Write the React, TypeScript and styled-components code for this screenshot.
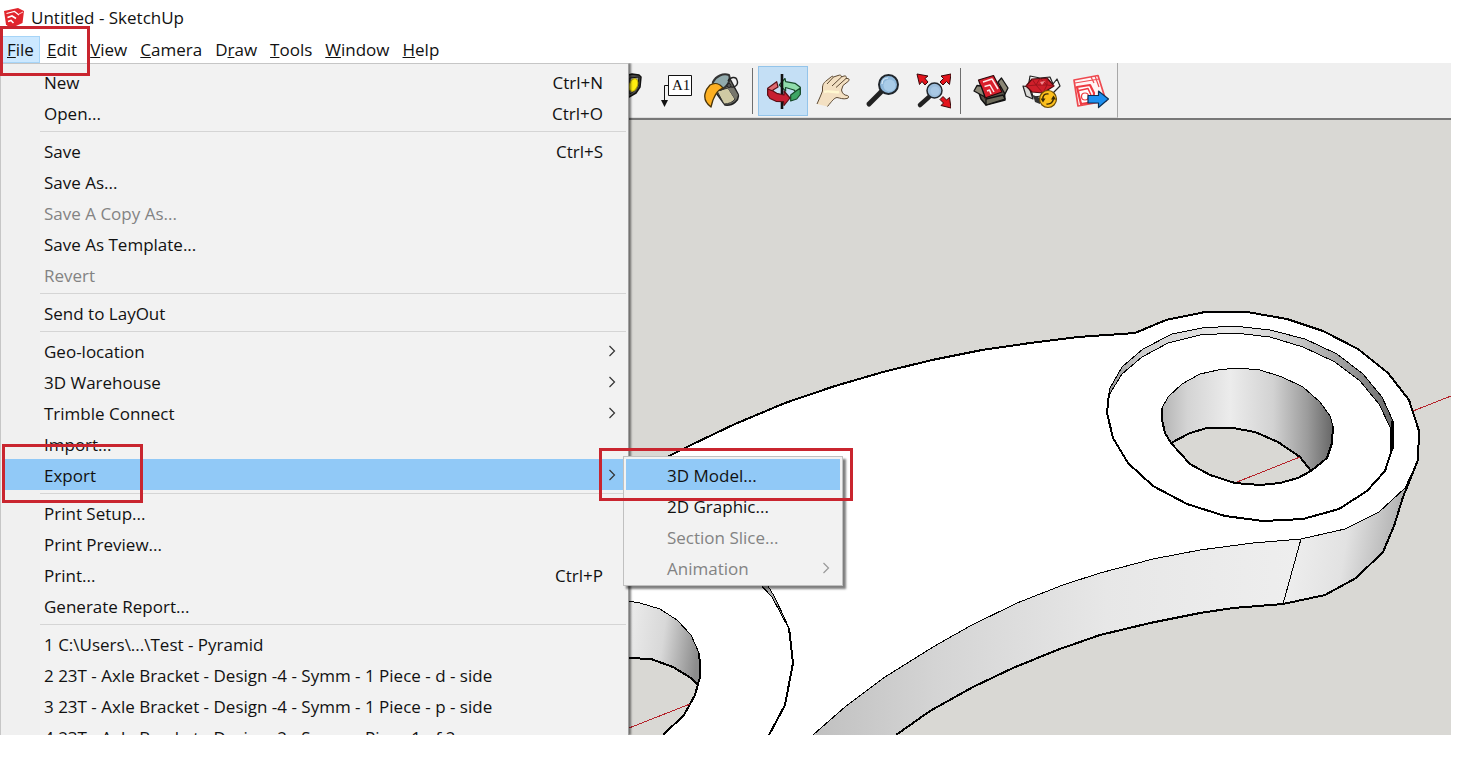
import React from 'react';
import styled, { createGlobalStyle, css } from 'styled-components';

const GlobalStyle = createGlobalStyle`
  * { box-sizing: border-box; }
  html, body { margin: 0; padding: 0; background: #fff; }
  body, button {
    font-family: 'Open Sans', 'Noto Sans', sans-serif;
    font-size: 17px;
    font-weight: 400;
    line-height: 24px;
    color: #111;
  }
  button { border: 0; background: none; padding: 0; margin: 0; text-align: left; }
  ul { list-style: none; margin: 0; padding: 0; }
`;

const Window = styled.div`
  position: relative;
  height: 100vh;
  padding: 0 11px 24px 0;
  display: flex;
  flex-direction: column;
  overflow: hidden;
`;

const TitleBar = styled.header`
  display: flex;
  align-items: center;
  gap: 7px;
  height: 36px;
  padding-left: 4px;
  flex: none;
`;

const Title = styled.h1`
  margin: 0;
  font-size: 17px;
  font-weight: 400;
`;

const MenuBar = styled.nav`
  display: flex;
  height: 27px;
  flex: none;
`;

const MenuBarButton = styled.button<{ $open?: boolean }>`
  height: 27px;
  padding: 0 6px 0 7px;
  ${(p) =>
    p.$open &&
    css`
      background: #cce8ff;
      box-shadow: inset 0 0 0 1px #a6d4f7;
    `}
`;

const Body = styled.div`
  display: flex;
  flex: 1;
  min-height: 0;
`;

const FileMenu = styled.ul`
  position: relative;
  z-index: 2;
  flex: none;
  width: 629px;
  padding: 2px;
  background: linear-gradient(to right, #f0f0f0 39px, #f2f2f2 39px);
  border: 1px solid #c6c6c6;
  border-right-color: #a0a0a0;
  border-bottom: 0;
  box-shadow: 2px 0 2px rgba(0, 0, 0, 0.5);
  clip-path: inset(0 -6px 0 0);
`;

const MenuRow = styled.li`
  position: relative;
`;

const MenuButton = styled.button<{ $active?: boolean }>`
  display: flex;
  align-items: center;
  justify-content: space-between;
  width: 100%;
  height: 31px;
  padding: 2px 23px 0 41px;
  background: ${(p) => (p.$active ? '#91c9f7' : 'transparent')};
  &:disabled { color: #838383; }
`;

const Chevron = styled.svg`
  width: 8px;
  height: 12px;
  margin: 0 -13px 2px 0;
  fill: none;
  stroke: #333;
  button:disabled & { stroke: #999; }
`;

const Divider = styled.li`
  height: 7px;
  margin-left: 37px;
  padding-top: 3px;
  &::before {
    content: '';
    display: block;
    height: 1px;
    background: #d5d5d5;
  }
`;

const SubMenu = styled.ul`
  position: absolute;
  z-index: 3;
  width: 220px;
  padding: 2px;
  background: #f2f2f2;
  border: 1px solid #c0c0c0;
  box-shadow: 3px 3px 2px rgba(0, 0, 0, 0.5);
`;

const ExportSubMenu = styled(SubMenu)`
  left: 623px;
  top: 456px;
`;

const Main = styled.main`
  display: flex;
  flex-direction: column;
  flex: 1;
  min-width: 0;
`;

const ToolbarArea = styled.div`
  flex: none;
  display: flex;
  height: 57px;
  background: #efefef;
  border-bottom: 2px solid #777;
`;

const Toolbar = styled.div`
  display: flex;
  padding: 3px 1px 0 0;
  background: #f1f1f1;
  border-right: 1px solid #a8a8a8;
  border-bottom: 1px solid #dcdcdc;
`;

const ToolButton = styled.button<{ $active?: boolean; $cut?: boolean }>`
  display: flex;
  align-items: center;
  justify-content: ${(p) => (p.$cut ? 'flex-end' : 'center')};
  width: ${(p) => (p.$cut ? 18 : 50)}px;
  height: 50px;
  overflow: hidden;
  ${(p) =>
    p.$active &&
    css`
      background: #c4dff5;
      box-shadow: inset 0 0 0 1px #93c4ea;
    `}
`;

const ToolSeparator = styled.span<{ $tight?: boolean }>`
  width: 1px;
  height: 46px;
  margin: ${(p) => (p.$tight ? '2px 5px 0 2px' : '2px 5px 0')};
  background: #6e6e6e;
`;

const Icon = styled.svg`
  width: 36px;
  height: 36px;
  flex: none;
  stroke-linejoin: round;
`;

const LogoIcon = styled.svg`
  width: 20px;
  height: 21px;
  flex: none;
`;

const Viewport = styled.svg`
  display: block;
  flex: 1;
  min-height: 0;
  width: 100%;
  background: #d9d8d4;
`;

const Highlight = styled.div<{ $x: number; $y: number; $w: number; $h: number }>`
  position: absolute;
  z-index: 4;
  left: ${(p) => p.$x}px;
  top: ${(p) => p.$y}px;
  width: ${(p) => p.$w}px;
  height: ${(p) => p.$h}px;
  border: 3px solid #c9252f;
  pointer-events: none;
`;

const Arrow = () => (
  <Chevron viewBox="0 0 8 12" strokeWidth="1.2" aria-hidden="true">
    <path d="M1.5 1 L6.5 6 L1.5 11" />
  </Chevron>
);

const Logo = () => (
  <LogoIcon viewBox="0 0 20 21" aria-hidden="true">
    <path d="M0 3 L14 0 L20 3 L18.500 15 L6.500 20.500 L2 16.500 Z" fill="#e1252d" />
    <path d="M2.500 5.500 L10.500 3.500 L15 7" fill="none" stroke="#fff" strokeWidth="1.200" />
    <path d="M3.500 9.500 L8 8 L12 10.500" fill="none" stroke="#fff" strokeWidth="1.600" />
    <path d="M4 13.500 L7 12.500 L9.500 15" fill="none" stroke="#fff" strokeWidth="1.600" />
    <path d="M15 6 L19 4" stroke="#fff" strokeWidth="0.800" />
  </LogoIcon>
);

const TapeIcon = () => (
  <Icon viewBox="0 0 36 36" aria-hidden="true">
    <path d="M8 4 L21 1 L28 2 L30 4 L29 14 L25 20 L18 24 L8 24 Z" fill="#4b4a48" stroke="#111" strokeWidth="1.500" />
    <path d="M19 5 L28 4 L27 13 L23 18 L19 21 Z" fill="#9a9a94" stroke="#111" />
    <ellipse cx="22.500" cy="12" rx="4" ry="6.500" transform="rotate(20 22.500 12)" fill="#ffee10" stroke="#b9a900" />
  </Icon>
);

const TextIcon = () => (
  <Icon viewBox="0 0 36 36" overflow="visible" aria-hidden="true">
    <rect x="14.500" y="2.500" width="23" height="20" fill="#fff" stroke="#111" />
    <text x="18" y="17" fontFamily="Liberation Serif, serif" fontSize="15" fill="#111">A1</text>
    <path d="M14 12.500 H10.500 V28" fill="none" stroke="#111" />
    <path d="M7 27 H14 L10.500 34 Z" fill="#111" />
  </Icon>
);

const PaintIcon = () => (
  <Icon viewBox="0 0 36 36" aria-hidden="true">
    <path d="M12 5 L25 4 L34 21 C36 27 29 33 21 32 L10 17 Z" fill="#6d6c63" stroke="#222" strokeWidth="1.500" />
    <path d="M13 18 L24 15 L31 26 C29 29 25 31 20 31 Z" fill="#cfc9a4" stroke="#333" />
    <path d="M25 8 L34 22 L31 26 L23 14 Z" fill="#77766c" />
    <path d="M9 9 C12 3 19 0 25 2 C27 7 24 14 16 17 C11 16 8 13 9 9 Z" fill="#91aaac" stroke="#333" strokeWidth="2" />
    <path d="M24 8 C26 4 32 3 33 7 C35 12 30 16 25 13" fill="none" stroke="#222" strokeWidth="1.400" />
    <circle cx="25" cy="12.500" r="2" fill="#555" stroke="#222" />
    <path d="M6 12 C11 9 16 11 19 15 C13 17 9 25 7 34 C3 31 0 26 1 21 C2 16 4 14 6 12 Z" fill="#fdb022" stroke="#4a3408" strokeWidth="1.300" />
  </Icon>
);

const OrbitIcon = () => (
  <Icon viewBox="0 0 36 36" aria-hidden="true">
    <path d="M20.500 14.500 L29 17 L31.500 20 L35.300 20 V14.300 L30 10.300 L20.700 8.700 L20 5.500 L14.300 12 L20.700 18 Z" fill="#8fdcab" stroke="#174a2a" strokeWidth="1.200" />
    <path d="M35.300 15 V21.500 L31.700 26 L25.700 28 V22 L31 18 Z" fill="#3fa565" stroke="#174a2a" strokeWidth="1.200" />
    <path d="M17 1 V36" stroke="#111" strokeWidth="2.600" />
    <path d="M11.700 8.700 L2.700 15.300 V22 L8 20 L8 17 L13 14 Z" fill="#e06a70" stroke="#5c1016" strokeWidth="1.200" />
    <path d="M2.700 16 V22 L5 25.500 L11 28.300 L18.500 28.700 L19 32.500 L25 25 L19 18 V22 L11.700 20.300 L8 18 Z" fill="#c81f32" stroke="#5c1016" strokeWidth="1.200" />
  </Icon>
);

const HandIcon = () => (
  <Icon viewBox="0 0 36 36" aria-hidden="true">
    <path
      d="M2 31 L5.500 23 L7.500 18 L7.500 14 C8 10 10 9 11 8 L16 4 C17 3 18 3 18.500 4 L23 2.500 C25 1.500 27 2.500 26.500 4 L29 3 C31 2.500 32 4 31 5.500 L33 5.500 C34.500 6 34.500 7.500 33 8.500 L28 12.500 L26.500 17 C27 20 29 22.500 32.500 22.500 C34 23 34 25 32 25.500 C28 26.500 25 25 22 24.500 C19 25 17 28 12.500 33.500"
      fill="#f3e0c2"
      stroke="#5d4a34"
      strokeWidth="1"
    />
    <path d="M18.500 4 L12 11 M26.500 4 L17 13 M31 5.500 L21 14.500" fill="none" stroke="#5d4a34" strokeWidth="1" />
    <path d="M9 19 C14 17 18 20 24 19" stroke="#fff8d0" strokeWidth="2.500" fill="none" />
  </Icon>
);

const ZoomIcon = () => (
  <Icon viewBox="0 0 36 36" aria-hidden="true">
    <path d="M16 19 L4 31" stroke="#222" strokeWidth="5" strokeLinecap="round" />
    <circle cx="23.500" cy="11.500" r="9.500" fill="#8fb8da" stroke="#20262c" strokeWidth="2" />
    <circle cx="24.500" cy="12.500" r="6" fill="#a9cce8" />
    <path d="M17 11 C17 7 20 5 23 5" stroke="#dcecf8" strokeWidth="1.200" fill="none" />
  </Icon>
);

const ZoomExtentsIcon = () => (
  <Icon viewBox="0 0 36 36" aria-hidden="true">
    <g fill="#e3141c" stroke="#3a0608" strokeWidth="1">
      <path d="M2 1 L13 3 L10 5.500 L13 9 L10 12 L7 8.500 L4.500 11.500 Z" />
      <path d="M36 1 L26 3 L28.500 5.500 L25 9 L28 12 L31.500 8.500 L34.500 11.500 Z" />
      <path d="M36 35 L34.500 24.500 L31.500 27 L28 23.500 L25 26.500 L28.500 30 L26 32.500 Z" />
    </g>
    <path d="M14 24 L5 32" stroke="#222" strokeWidth="4.500" strokeLinecap="round" />
    <circle cx="19.500" cy="17.500" r="7.500" fill="#9cbddb" stroke="#20262c" strokeWidth="1.500" />
    <circle cx="20" cy="18" r="4.500" fill="#a9c8e4" />
  </Icon>
);

const WarehouseIcon = () => (
  <Icon viewBox="0 0 36 36" aria-hidden="true">
    <path d="M4 14 L8 26 L13 32 L32 27 L31 14 Z" fill="#57554a" stroke="#111" strokeWidth="1.500" />
    <path d="M28.500 5 L35 15 L32 21 L25 9 Z" fill="#8b8776" stroke="#111" strokeWidth="1.300" />
    <path d="M13 26 L30 22 L32 26 L13 32 Z" fill="#6c6a5a" stroke="#111" strokeWidth="1.300" />
    <path d="M5.500 7 L20.500 2.500 L29 19 L12 25 Z" fill="#d91f2c" stroke="#2b0709" strokeWidth="1.200" />
    <path d="M4 12.500 L8 13 L12 24 L1 18 Z" fill="#8b8776" stroke="#111" strokeWidth="1.300" />
    <path d="M10 9 L19 6 L25 16 M11.500 13.500 L17 12 L21 19 M14 18 L16.500 17 L18 21" fill="none" stroke="#ffe9e9" strokeWidth="1.500" />
  </Icon>
);

const ExtensionIcon = () => (
  <Icon viewBox="0 0 36 36" overflow="visible" aria-hidden="true">
    <path d="M6 9 L7 3 L17 5 L27 4 L30 11 L34 6 L37 13 L28 22 L10 24 Z" fill="#f7f7f5" stroke="#222" strokeWidth="1.200" />
    <path d="M0 13 L6 14 L10 26 L3 23 Z" fill="#d9d9d6" stroke="#222" strokeWidth="1.200" />
    <path d="M10 22 L17 25 L17 31 L12 29 Z" fill="#333" />
    <path d="M3 13 L9 6 L24 5 L31 13 L20 20 L9 19 Z" fill="#cf1f2a" stroke="#4a090d" strokeWidth="1.200" />
    <path d="M9 6 L13 12 L20 20 L24 12 L24 5 M3 13 L13 12 L24 12 L31 13 M13 12 L17 5.500 L24 12" fill="none" stroke="#9c141c" strokeWidth="1" />
    <path d="M17 9 L22 8 L19 12 Z" fill="#f08b90" />
    <circle cx="25" cy="26" r="8.500" fill="#fdc01c" stroke="#6b4b05" strokeWidth="1.200" />
    <path d="M20 26.500 C19.500 22.500 21.500 20.500 25.500 21 M30.500 24.500 C30.500 29.500 27.500 31.500 23.500 31" fill="none" stroke="#3a2a05" strokeWidth="1.400" />
    <path d="M17.500 25.500 L22.500 25.500 L20 29.500 Z M28 26.500 L33 26.500 L30.500 22.500 Z" fill="#3a2a05" />
  </Icon>
);

const LayoutIcon = () => (
  <Icon viewBox="0 0 36 36" aria-hidden="true">
    <path d="M1 7 L25 2.500 L33 28 L5 33 Z" fill="#fff5f5" stroke="#ee4a50" strokeWidth="1.700" />
    <path d="M2 10 L26 6 M18 4 L21 10 M22 3 L26 14" stroke="#ee4a50" strokeWidth="1.200" fill="none" />
    <path d="M4 14 L17 12 L21 20 L20 29 L8 31 Z" fill="#fff" stroke="#ee3a42" strokeWidth="2.200" />
    <path d="M6 17.500 L15 15.500 L18 22" stroke="#ee3a42" strokeWidth="1.500" fill="none" />
    <circle cx="12" cy="23.500" r="3.500" fill="none" stroke="#ee3a42" strokeWidth="1.200" />
    <path d="M15 22.500 H25.500 V18 L35.500 26 L25.500 34.500 V30 H15 Z" fill="#1e90f0" stroke="#0a2f55" strokeWidth="1.200" />
  </Icon>
);

const Scene = () => (
  <Viewport
    viewBox="629 120 822 615"
    preserveAspectRatio="xMinYMin slice"
    role="img"
    aria-label="Axle bracket model"
    shapeRendering="crispEdges"
  >
    <defs>
      <linearGradient id="hole" x1="0" x2="1" y1="0" y2="0">
        <stop offset="0" stopColor="#b4b4b4" />
        <stop offset="0.15" stopColor="#d4d4d4" />
        <stop offset="0.4" stopColor="#ececec" />
        <stop offset="0.65" stopColor="#d2d2d2" />
        <stop offset="0.85" stopColor="#9c9c9c" />
        <stop offset="1" stopColor="#666" />
      </linearGradient>
      <linearGradient id="rim" x1="0" x2="1" y1="0" y2="0">
        <stop offset="0" stopColor="#999" />
        <stop offset="0.12" stopColor="#cdcdcd" />
        <stop offset="0.42" stopColor="#eaeaea" />
        <stop offset="0.65" stopColor="#ccc" />
        <stop offset="0.85" stopColor="#999" />
        <stop offset="1" stopColor="#666" />
      </linearGradient>
      <linearGradient id="side" gradientUnits="userSpaceOnUse" x1="813" x2="1301" y1="0" y2="0">
        <stop offset="0" stopColor="#c0c0c0" />
        <stop offset="0.25" stopColor="#d4d4d4" />
        <stop offset="0.6" stopColor="#e7e7e7" />
        <stop offset="1" stopColor="#eee" />
      </linearGradient>
      <linearGradient id="endSide" gradientUnits="userSpaceOnUse" x1="1290" x2="1412" y1="540" y2="560">
        <stop offset="0" stopColor="#eee" />
        <stop offset="0.45" stopColor="#e2e2e2" />
        <stop offset="0.8" stopColor="#b8b8b8" />
        <stop offset="1" stopColor="#808080" />
      </linearGradient>
      <linearGradient id="lowerHole" gradientUnits="userSpaceOnUse" x1="629" x2="701" y1="620" y2="630">
        <stop offset="0" stopColor="#ebebeb" />
        <stop offset="0.5" stopColor="#d8d8d8" />
        <stop offset="1" stopColor="#8c8c8c" />
      </linearGradient>
    </defs>

    {/* top face */}
    <path
      fill="#fff"
      d="M629 475 L659 461 L691 445 L735 424 L785 403 L835 386 L883 372 L932 360 L982 350 L1030 343 L1078 337 L1135 333 L1166 320 L1205 312 L1247 312 L1287 319 L1323 331 L1358 349 L1388 373 L1409 400 L1419 431 L1418 460 L1405 488 L1379 512 L1345 529 L1301 539 L1253 543 L1200 550 L1153 559 L1100 573 L1063 585 L1017 603 L970 626 L933 647 L885 677 L845 707 L813 735 H629 Z"
    />
    {/* side walls */}
    <path
      fill="url(#side)"
      d="M1301 539 L1253 543 L1200 550 L1153 559 L1100 573 L1063 585 L1017 603 L970 626 L933 647 L885 677 L845 707 L813 735 H896 L930 711 L973 687 L1013 668 L1057 650 L1100 635 L1150 623 L1200 613 L1233 608 L1283 604 Z"
    />
    <path
      fill="url(#endSide)"
      d="M1301 539 L1345 529 L1379 512 L1405 488 L1418 460 L1403 497 L1394 526 L1383 552 L1356 578 L1325 595 L1283 604 Z"
    />
    <path
      fill="none"
      stroke="#000"
      d="M813 735 L845 707 L885 677 L933 647 L970 626 L1017 603 L1063 585 L1100 573 L1153 559 L1200 550 L1253 543 L1301 539 L1345 529 L1379 512 L1405 488 L1418 460 M1301 539 L1283 604"
    />
    <path
      fill="none"
      stroke="#000"
      strokeWidth="2"
      d="M629 475 L659 461 L691 445 L735 424 L785 403 L835 386 L883 372 L932 360 L982 350 L1030 343 L1078 337 L1135 333 L1166 320 L1205 312 L1247 312 L1287 319 L1323 331 L1358 349 L1388 373 L1409 400 L1419 431 L1418 460 L1403 497 L1394 526 L1383 552 L1356 578 L1325 595 L1283 604 L1233 608 L1200 613 L1150 623 L1100 635 L1057 650 L1013 668 L973 687 L930 711 L896 735"
    />

    {/* recess around the upper hole */}
    <path
      fill="url(#rim)"
      stroke="#000"
      d="M1109 395 L1110 388 L1122 367 L1143 349 L1172 334 L1202 328 L1234 326 L1270 330 L1305 339 L1337 354 L1363 374 L1382 397 L1393 421 L1393 449 L1391 450 L1390 427 L1379 404 L1360 381 L1335 362 L1303 347 L1270 337 L1235 333 L1200 335 L1168 343 L1142 357 L1122 374 Z"
    />
    <path
      fill="none"
      stroke="#000"
      strokeWidth="2"
      d="M1109 393 L1107 413 L1113 438 L1128 463 L1153 486 L1187 504 L1225 516 L1263 521 L1303 519 L1339 509 L1367 491 L1385 471 L1392 449 V421"
    />

    {/* upper hole */}
    <path
      fill="url(#hole)"
      stroke="#000"
      d="M1162 420 V408 L1168 397 L1182 384 L1200 374 L1218 370 L1237 368 L1260 370 L1282 377 L1303 387 L1320 402 L1330 416 L1333 426 L1332 443 L1327 458 L1311 471 L1298 478 L1280 483 L1260 485 L1235 483 L1210 475 L1190 464 L1171 443 L1165 433 Z"
    />
    <path
      fill="#d9d8d4"
      stroke="#000"
      strokeWidth="2"
      d="M1171 443 L1190 433 L1207 428 L1233 428 L1255 432 L1278 442 L1300 457 L1311 471 L1298 478 L1280 483 L1260 485 L1235 483 L1210 475 L1190 464 Z"
    />
    <path
      fill="none"
      stroke="#000"
      strokeWidth="2"
      d="M1162 408 V420 L1165 433 L1171 443 M1333 426 L1332 443 L1327 458 L1311 471"
    />

    {/* lower hole */}
    <path
      fill="url(#lowerHole)"
      stroke="#000"
      d="M628 601 L640 603 L660 609 L677 620 L691 635 L699 653 L700 665 V677 L698 685 L691 678 L673 667 L651 659 L628 658 Z"
    />
    <path fill="#d9d8d4" d="M628 658 L651 659 L673 667 L691 678 L698 685 L695 695 L684 715 L663 735 H628 Z" />
    <path
      fill="none"
      stroke="#000"
      strokeWidth="2"
      d="M628 658 L651 659 L673 667 L691 678 L698 685 M699 653 L700 665 V677 L695 695 L684 715 L663 735"
    />
    <path fill="#aaa" stroke="#000" d="M758 582 L772 597 L789 629 L786 621 L774 596 L768 586 L764 580 Z" />
    <path fill="none" stroke="#000" strokeWidth="2" d="M789 628 L793 663 L785 705 L769 735" />

    {/* red axis */}
    <path
      fill="none"
      stroke="#b5222a"
      d="M629 728 L690 704 M1237 482 L1300 457 M1413 411 L1451 396"
    />
  </Viewport>
);

type Entry = {
  label: string;
  keys?: string;
  disabled?: boolean;
  arrow?: boolean;
  active?: boolean;
};

const bar: [string, string, string][] = [
  ['', 'F', 'ile'],
  ['', 'E', 'dit'],
  ['', 'V', 'iew'],
  ['', 'C', 'amera'],
  ['D', 'r', 'aw'],
  ['', 'T', 'ools'],
  ['', 'W', 'indow'],
  ['', 'H', 'elp'],
];

const groups: Entry[][] = [
  [
    { label: 'New', keys: 'Ctrl+N' },
    { label: 'Open...', keys: 'Ctrl+O' },
  ],
  [
    { label: 'Save', keys: 'Ctrl+S' },
    { label: 'Save As...' },
    { label: 'Save A Copy As...', disabled: true },
    { label: 'Save As Template...' },
    { label: 'Revert', disabled: true },
  ],
  [{ label: 'Send to LayOut' }],
  [
    { label: 'Geo-location', arrow: true },
    { label: '3D Warehouse', arrow: true },
    { label: 'Trimble Connect', arrow: true },
    { label: 'Import...' },
    { label: 'Export', arrow: true, active: true },
  ],
  [
    { label: 'Print Setup...' },
    { label: 'Print Preview...' },
    { label: 'Print...', keys: 'Ctrl+P' },
    { label: 'Generate Report...' },
  ],
  [
    { label: '1 C:\\Users\\...\\Test - Pyramid' },
    { label: '2 23T - Axle Bracket - Design -4 - Symm - 1 Piece - d - side' },
    { label: '3 23T - Axle Bracket - Design -4 - Symm - 1 Piece - p - side' },
    { label: '4 23T - Axle Bracket - Design -2 - Symm - Piece 1 of 2' },
  ],
];

const exportEntries: Entry[] = [
  { label: '3D Model...', active: true },
  { label: '2D Graphic...' },
  { label: 'Section Slice...', disabled: true },
  { label: 'Animation', disabled: true, arrow: true },
];

const MenuEntry = ({ entry }: { entry: Entry }) => (
  <MenuRow>
    <MenuButton type="button" $active={entry.active} disabled={entry.disabled}>
      <span>{entry.label}</span>
      {entry.keys && <span>{entry.keys}</span>}
      {entry.arrow && <Arrow />}
    </MenuButton>
  </MenuRow>
);

export default function App() {
  return (
    <>
      <GlobalStyle />
      <Window>
        <TitleBar>
          <Logo />
          <Title>Untitled - SketchUp</Title>
        </TitleBar>
        <MenuBar>
          {bar.map(([before, key, after]) => (
            <MenuBarButton type="button" key={before + key + after} $open={key === 'F'}>
              {before}
              <u>{key}</u>
              {after}
            </MenuBarButton>
          ))}
        </MenuBar>
        <Body>
          <FileMenu>
            {groups.map((group, i) => (
              <React.Fragment key={i}>
                {i > 0 && <Divider role="separator" />}
                {group.map((entry) => (
                  <MenuEntry key={entry.label} entry={entry} />
                ))}
              </React.Fragment>
            ))}
          </FileMenu>
          <Main>
            <ToolbarArea>
              <Toolbar role="toolbar">
                <ToolButton type="button" aria-label="Tape Measure" $cut><TapeIcon /></ToolButton>
                <ToolButton type="button" aria-label="Text"><TextIcon /></ToolButton>
                <ToolButton type="button" aria-label="Paint Bucket"><PaintIcon /></ToolButton>
                <ToolSeparator />
                <ToolButton type="button" aria-label="Orbit" $active><OrbitIcon /></ToolButton>
                <ToolButton type="button" aria-label="Pan"><HandIcon /></ToolButton>
                <ToolButton type="button" aria-label="Zoom"><ZoomIcon /></ToolButton>
                <ToolButton type="button" aria-label="Zoom Extents"><ZoomExtentsIcon /></ToolButton>
                <ToolSeparator $tight />
                <ToolButton type="button" aria-label="3D Warehouse"><WarehouseIcon /></ToolButton>
                <ToolButton type="button" aria-label="Extension Warehouse"><ExtensionIcon /></ToolButton>
                <ToolButton type="button" aria-label="Send to LayOut"><LayoutIcon /></ToolButton>
              </Toolbar>
            </ToolbarArea>
            <Scene />
          </Main>
        </Body>
        <ExportSubMenu>
          {exportEntries.map((entry) => (
            <MenuEntry key={entry.label} entry={entry} />
          ))}
        </ExportSubMenu>
        <Highlight $x={0} $y={26} $w={90} $h={50} />
        <Highlight $x={2} $y={444} $w={141} $h={59} />
        <Highlight $x={599} $y={448} $w={254} $h={53} />
      </Window>
    </>
  );
}
